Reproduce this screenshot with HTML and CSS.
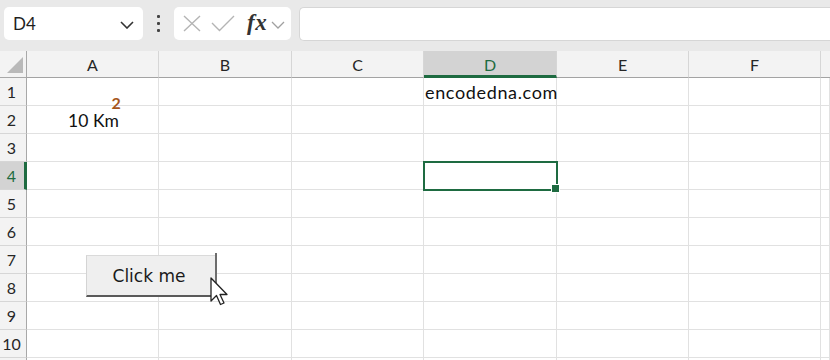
FILE: index.html
```html
<!DOCTYPE html>
<html>
<head>
<meta charset="utf-8">
<link rel="stylesheet" href="styles.css">
</head>
<body>
<div class="app">
  <div class="toolbar">
    <div class="namebox">
      <span class="ref">D4</span>
      <svg class="chev" width="14" height="8" viewBox="0 0 14 8"><path d="M1 1 L7 7 L13 1" fill="none" stroke="#333" stroke-width="1.6"/></svg>
    </div>
    <div class="dots"><i></i><i></i><i></i></div>
    <div class="fxbox">
      <svg width="18" height="17" viewBox="0 0 18 17"><path d="M1 1 L17 16 M17 1 L1 16" stroke="#b4b4b4" stroke-width="1.4" fill="none"/></svg>
      <svg width="24" height="17" viewBox="0 0 24 17"><path d="M1 8 L8.5 15.5 L23 1" stroke="#b4b4b4" stroke-width="1.4" fill="none"/></svg>
      <span class="fx">fx</span>
      <svg width="14" height="8" viewBox="0 0 14 8"><path d="M1 1 L7 7 L13 1" fill="none" stroke="#a0a0a0" stroke-width="1.3"/></svg>
    </div>
    <div class="formula"></div>
  </div>

  <div class="sheet">
    <div class="corner"><span class="tri"></span></div>
    <div class="ch">A</div><div class="ch">B</div><div class="ch">C</div><div class="ch sel">D</div><div class="ch">E</div><div class="ch">F</div><div class="ch last"></div>

    <div class="rh">1</div><div class="c"></div><div class="c"></div><div class="c"></div><div class="c txt">encodedna.com</div><div class="c"></div><div class="c"></div><div class="c"></div>
    <div class="rh">2</div><div class="c ctr"><span class="km">10 Km<span class="sup">2</span></span></div><div class="c"></div><div class="c"></div><div class="c"></div><div class="c"></div><div class="c"></div><div class="c"></div>
    <div class="rh">3</div><div class="c"></div><div class="c"></div><div class="c"></div><div class="c"></div><div class="c"></div><div class="c"></div><div class="c"></div>
    <div class="rh sel">4</div><div class="c"></div><div class="c"></div><div class="c"></div><div class="c active"></div><div class="c"></div><div class="c"></div><div class="c"></div>
    <div class="rh">5</div><div class="c"></div><div class="c"></div><div class="c"></div><div class="c"></div><div class="c"></div><div class="c"></div><div class="c"></div>
    <div class="rh">6</div><div class="c"></div><div class="c"></div><div class="c"></div><div class="c"></div><div class="c"></div><div class="c"></div><div class="c"></div>
    <div class="rh">7</div><div class="c"></div><div class="c"></div><div class="c"></div><div class="c"></div><div class="c"></div><div class="c"></div><div class="c"></div>
    <div class="rh">8</div><div class="c"></div><div class="c"></div><div class="c"></div><div class="c"></div><div class="c"></div><div class="c"></div><div class="c"></div>
    <div class="rh">9</div><div class="c"></div><div class="c"></div><div class="c"></div><div class="c"></div><div class="c"></div><div class="c"></div><div class="c"></div>
    <div class="rh">10</div><div class="c"></div><div class="c"></div><div class="c"></div><div class="c"></div><div class="c"></div><div class="c"></div><div class="c"></div>
    <div class="rh"></div><div class="c"></div><div class="c"></div><div class="c"></div><div class="c"></div><div class="c"></div><div class="c"></div><div class="c"></div>
  </div>

  <div class="btn">Click me</div>
  <svg class="cursor" width="18" height="29" viewBox="0 0 18 29">
    <path d="M1 1 L1 24 L6.5 18.5 L10.5 27.5 L14 26 L10 17.5 L17 17.5 Z" fill="#fff" stroke="#222" stroke-width="1.3" stroke-linejoin="round"/>
  </svg>
</div>
</body>
</html>
```

FILE: styles.css
```css
* { box-sizing: border-box; }
html, body { margin: 0; padding: 0; }
body {
  width: 830px;
  height: 360px;
  overflow: hidden;
  background: #ffffff;
  font-family: Lato, "Noto Sans", sans-serif;
}
.app { position: relative; width: 830px; height: 360px; overflow: hidden; }

.toolbar {
  height: 51px;
  background: #e9e9e9;
  display: flex;
  align-items: flex-start;
  padding: 7px 0 0 4px;
}
.namebox {
  width: 139px;
  height: 33px;
  background: #fff;
  border-radius: 5px;
  display: flex;
  align-items: center;
  justify-content: space-between;
  padding: 0 9px 0 9px;
}
.namebox .ref { font-size: 17px; color: #1f1f1f; }
.namebox .chev { margin-top: 2px; }
.dots {
  width: 31px;
  height: 33px;
  display: flex;
  flex-direction: column;
  align-items: center;
  justify-content: center;
  gap: 4px;
}
.dots i { display: block; width: 3px; height: 3px; background: #444; border-radius: 1px; }
.fxbox {
  width: 117px;
  height: 33px;
  background: #fff;
  border-radius: 5px;
  display: flex;
  align-items: center;
  padding: 0 0 0 9px;
}
.fxbox svg:nth-child(2) { margin-left: 10px; }
.fx {
  font-family: "Liberation Serif", serif;
  font-style: italic;
  font-weight: bold;
  font-size: 23px;
  color: #333;
  margin-left: 12px;
  letter-spacing: 0.5px;
  line-height: 1;
  margin-top: -3px;
}
.fxbox svg:last-child { margin-left: 4px; margin-top: 2px; }
.formula {
  margin-left: 8px;
  flex: 1;
  height: 34px;
  background: #fff;
  border: 1px solid #d6d6d6;
  border-right: none;
  border-radius: 5px 0 0 5px;
}

.sheet {
  display: grid;
  grid-template-columns: 27px 132px 133px 132px 133px 132px 132px 9px;
  grid-template-rows: 27px repeat(10, 28px) 28px;
  background: #fff;
}
.corner {
  background: #f3f3f3;
  border-right: 1px solid #a8a8a8;
  border-bottom: 1px solid #a8a8a8;
  position: relative;
}
.tri {
  position: absolute;
  left: 7px;
  top: 6px;
  width: 0; height: 0;
  border-left: 16px solid transparent;
  border-bottom: 16px solid #b9b9b9;
}
.ch {
  background: #f3f3f3;
  border-right: 1px solid #d6d6d6;
  border-bottom: 1px solid #a3a3a3;
  display: flex;
  align-items: center;
  justify-content: center;
  font-size: 16px;
  color: #262626;
  padding-top: 1px;
}
.ch.last { border-right: none; }
.ch.sel {
  background: #d3d3d3;
  color: #1e6b41;
  border-bottom: 3px solid #1e6b41;
  padding-top: 3px;
}
.rh {
  background: #f3f3f3;
  border-right: 1px solid #a8a8a8;
  border-bottom: 1px solid #d6d6d6;
  display: flex;
  align-items: center;
  justify-content: center;
  padding-right: 3px;
  font-size: 16px;
  color: #262626;
}
.rh.sel {
  background: #d3d3d3;
  color: #1e6b41;
  border-right: 3px solid #1e6b41;
  padding-right: 1px;
}
.c {
  border-right: 1px solid #e1e1e1;
  border-bottom: 1px solid #e1e1e1;
  font-size: 17.5px;
  color: #111;
  display: flex;
  align-items: flex-end;
  padding: 0 0 2px 1px;
  white-space: nowrap;
}
.c.txt { font-size: 18px; letter-spacing: 0.65px; }
.c.ctr { justify-content: center; padding-left: 2px; padding-bottom: 4px; }
.km { position: relative; line-height: 1; }
.sup {
  position: absolute;
  right: -2px;
  top: -17px;
  font-size: 16px;
  line-height: 1;
  font-weight: bold;
  color: #a6561c;
}
.c.active {
  position: relative;
  outline: 2px solid #1e6b41;
  outline-offset: -1px;
  z-index: 2;
}
.c.active::after {
  content: "";
  position: absolute;
  right: -4px;
  bottom: -4px;
  width: 7px;
  height: 7px;
  background: #1e6b41;
  border: 1px solid #fff;
}

.btn {
  position: absolute;
  left: 86px;
  top: 255px;
  width: 131px;
  height: 42px;
  background: #efefef;
  border-top: 1px solid #dadada;
  border-left: 1px solid #d4d4d4;
  border-right: 2px solid #6d6d6d;
  border-bottom: 2px solid #5a5a5a;
  font-family: "DejaVu Sans", sans-serif;
  font-size: 17px;
  color: #1a1a1a;
  display: flex;
  align-items: center;
  justify-content: center;
  padding-right: 4px;
  padding-top: 1px;
  z-index: 3;
}
.btn::before {
  content: "";
  position: absolute;
  right: -2px;
  top: -3px;
  width: 2px;
  height: 3px;
  background: #6d6d6d;
}
.cursor {
  position: absolute;
  left: 210px;
  top: 277px;
  z-index: 4;
}
```
